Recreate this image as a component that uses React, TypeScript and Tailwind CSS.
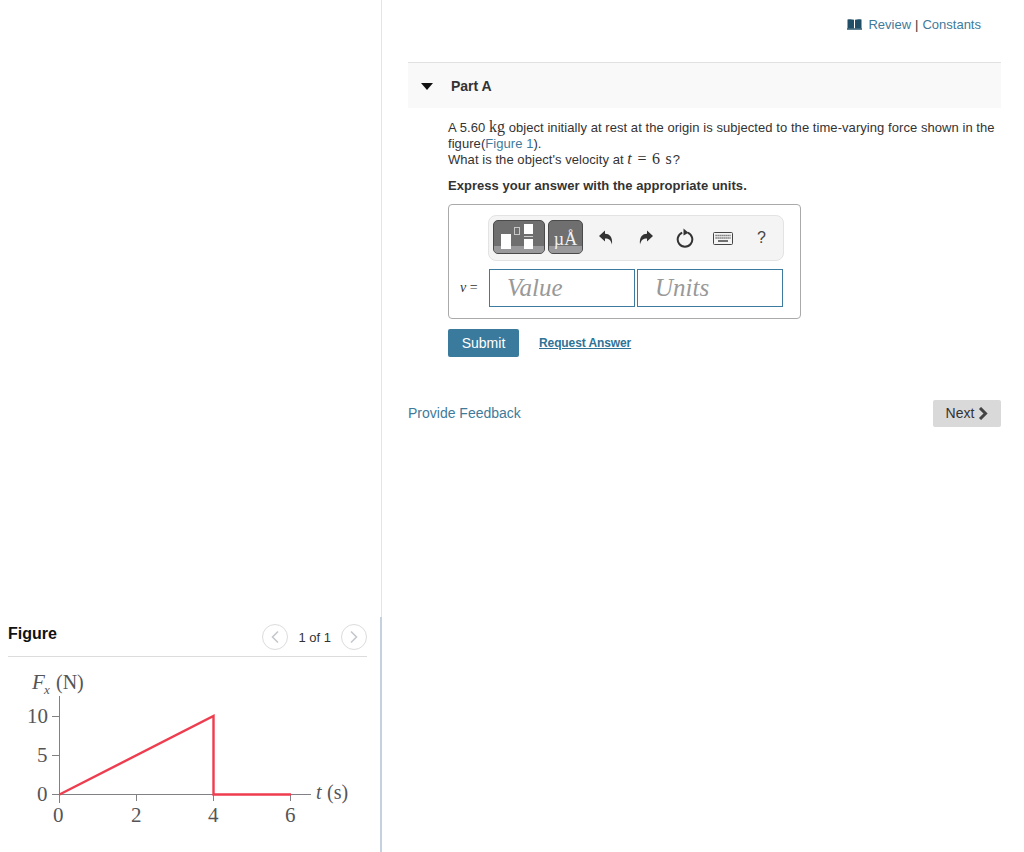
import React from "react";

const serif = "font-['Liberation_Serif',serif]";

function Book() {
  return (
    <svg width="15" height="11" viewBox="0 0 15 11" className="mr-[6px]">
      <path d="M0.5 0.5 C2.5 0 5 0 7 0.8 V9.5 H0.5Z" fill="#1f4e66" />
      <path d="M14.5 0.5 C12.5 0 10 0 8 0.8 V9.5 H14.5Z" fill="#1f4e66" />
      <rect x="0" y="9.3" width="15" height="1.4" fill="#1f4e66" />
    </svg>
  );
}

function FigureChart() {
  return (
    <svg width="381" height="195" viewBox="0 657 381 195" className="block">
      <g stroke="#808184" strokeWidth="1" fill="none">
        <path d="M59.5 696 V803" />
        <path d="M52 716.5 H59.5 M52 755.5 H59.5 M52 794.5 H311" />
        <path d="M136.5 794 V801 M213.5 794 V801 M290.5 794 V801" />
      </g>
      <path d="M59.5 794.5 L213.5 716 V794.5 H291" fill="none" stroke="#ee3d4f" strokeWidth="2.4" />
      <g fill="#555557" fontFamily="'Liberation Serif', serif" fontSize="21">
        <text x="32" y="689" fontStyle="italic">F</text>
        <text x="44" y="694" fontStyle="italic" fontSize="13">x</text>
        <text x="56" y="689" fontSize="20">(N)</text>
        <text x="27" y="723">10</text>
        <text x="37" y="762">5</text>
        <text x="37" y="801">0</text>
        <text x="53" y="822">0</text>
        <text x="131" y="822">2</text>
        <text x="208" y="822">4</text>
        <text x="285" y="822">6</text>
        <text x="316" y="799" fontStyle="italic" fontSize="20">t</text>
        <text x="327" y="799" fontSize="20">(s)</text>
      </g>
    </svg>
  );
}

function Pager({ dir }: { dir: "l" | "r" }) {
  return (
    <span className="flex h-[26px] w-[26px] items-center justify-center rounded-full border border-[#dcdcdc] bg-white">
      <svg width="10" height="14" viewBox="0 0 10 14" fill="none" stroke="#c4c8cc" strokeWidth="1.6">
        <path d={dir === "l" ? "M8 1.5 L2.5 7 L8 12.5" : "M2 1.5 L7.5 7 L2 12.5"} />
      </svg>
    </span>
  );
}

function Tools() {
  return (
    <div className="ml-[39px] flex h-[46px] w-[296px] items-center rounded-[8px] border border-[#e3e3e3] bg-[#f4f4f4] pl-[4px]">
      <span className="relative mb-[2px] h-[34px] w-[52px] overflow-hidden rounded-[5px] border border-[#4a4a4a] bg-[#6f6f6f]">
        <span className="absolute inset-x-0 bottom-0 h-[7px] bg-[#99999c]" />
        <span className="absolute left-[7px] top-[13px] h-[15px] w-[10px] bg-white" />
        <span className="absolute left-[20px] top-[6px] h-[8px] w-[6px] border border-[#c8c8c8]" />
        <span className="absolute left-[30px] top-[3px] h-[10px] w-[9px] bg-white" />
        <span className="absolute left-[30px] top-[15px] h-px w-[9px] bg-[#d0d0d0]" />
        <span className="absolute left-[30px] top-[18px] h-[10px] w-[9px] bg-white" />
      </span>
      <span className="relative mb-[2px] ml-[3px] h-[34px] w-[35px] overflow-hidden rounded-[5px] border border-[#4a4a4a] bg-[#6f6f6f]">
        <span className="absolute inset-x-0 bottom-0 h-[7px] bg-[#99999c]" />
        <span className={`absolute inset-x-0 top-[8px] text-center text-[18px] leading-[20px] text-[#f2f2f2] ${serif}`}>µÅ</span>
      </span>
      <svg width="14" height="15" viewBox="0 0 14 14" className="ml-[16px] mb-[1px]" fill="#333">
        <path d="M0 5.5 L6 0 V3.3 C10.5 3.3 13.8 6.5 13 14 C11.8 9.5 10 8 6 8 V11Z" />
      </svg>
      <svg width="14" height="15" viewBox="0 0 14 14" className="ml-[26px] mb-[1px]" fill="#333">
        <path d="M14 5.5 L8 0 V3.3 C3.5 3.3 0.2 6.5 1 14 C2.2 9.5 4 8 8 8 V11Z" />
      </svg>
      <svg width="18" height="20" viewBox="0 0 18 20" className="ml-[23px]" fill="none">
        <path d="M6.2 4.6 A7.3 7.3 0 1 0 11.8 4.6" stroke="#333" strokeWidth="2" />
        <path d="M7.5 0.5 L12.5 4.8 L7.5 7.5Z" fill="#333" />
      </svg>
      <svg width="20" height="13" viewBox="0 0 20 13" className="ml-[19px]" fill="none">
        <rect x="0.5" y="0.5" width="19" height="12" rx="1" fill="#f4f4f4" stroke="#444" />
        <path d="M2.5 3.5 H17.5 M2.5 6 H17.5" stroke="#555" strokeDasharray="1.2 0.8" strokeWidth="1.3" />
        <path d="M5 9 H15" stroke="#444" strokeWidth="1.5" />
      </svg>
      <span className="ml-[24px] mb-[1px] text-[16px] leading-none text-[#444]">?</span>
    </div>
  );
}

export default function App() {
  return (
    <div className="flex h-[852px] w-[1024px] overflow-hidden bg-white font-['Liberation_Sans',Arial,sans-serif] text-[#333]">
      <aside className="relative flex w-[382px] shrink-0 flex-col justify-end border-r border-[#e4e4e4]">
        <span className="absolute bottom-0 right-[-1px] h-[235px] w-[2px] bg-[#c5d1de]" />
        <div className="ml-[8px] flex h-[40px] w-[359px] items-center justify-between border-b border-[#dcdcdc] pb-[7px]">
          <h2 className="mt-[1px] text-[16px] font-bold leading-none text-[#111]">Figure</h2>
          <div className="mt-[8px] flex items-center">
            <Pager dir="l" />
            <span className="mx-[10px] text-[13px] leading-none text-[#333]">1 of 1</span>
            <Pager dir="r" />
          </div>
        </div>
        <FigureChart />
      </aside>

      <main className="flex-1 pl-[26px] pr-[23px]">
        <div className="flex h-[62px] items-start justify-end pr-[20px] pt-[17px] text-[13px] leading-[15px] text-[#3f7a9b]">
          <span className="flex items-center">
            <Book />
            Review <span className="mx-[4px] text-[#333]">|</span> Constants
          </span>
        </div>
        <div className="flex h-[46px] items-center border-t border-[#e2e2e2] bg-[#f9f9f9] pl-[13px] pt-[1px]">
          <span className="h-0 w-0 border-x-[6px] border-t-[7px] border-x-transparent border-t-[#111]" />
          <h3 className="ml-[18px] text-[14px] font-bold text-[#333]">Part A</h3>
        </div>
        <div className="pl-[40px] pt-[12px]">
          <p className="whitespace-nowrap text-[13px] leading-[16px] tracking-[0.06px] text-[#333]">
            A 5.60 <span className={`text-[16px] leading-[0] ${serif}`}>kg</span> object initially at rest at the origin is subjected to the time-varying force shown in the
            <br />
            figure(<span className="text-[#3f7a9b]">Figure 1</span>).
            <br />
            What is the object's velocity at <span className={`text-[16px] leading-[0] tracking-[0.8px] ${serif}`}><i>t</i> = 6 s</span>?
          </p>
          <p className="mt-[10px] text-[13px] font-bold leading-[16px] tracking-[0.04px] text-[#333]">Express your answer with the appropriate units.</p>
          <div className="mt-[10px] h-[115px] w-[353px] rounded-[4px] border border-[#aaa] pt-[10px]">
            <Tools />
            <div className="mt-[8px] flex items-center">
              <span className={`w-[40px] pl-[11px] text-[14px] leading-none text-[#333] ${serif}`}><i>v</i> =</span>
              <span className={`flex h-[38px] w-[146px] items-center border border-[#3d7c9e] pl-[17px] text-[25px] italic text-[#999] ${serif}`}>Value</span>
              <span className={`ml-[2px] flex h-[38px] w-[146px] items-center border border-[#3d7c9e] pl-[17px] text-[25px] italic text-[#999] ${serif}`}>Units</span>
            </div>
          </div>
          <div className="mt-[10px] flex items-center">
            <span className="flex h-[28px] w-[71px] items-center justify-center rounded-[2px] bg-[#3a7a9c] text-[14px] text-white">Submit</span>
            <span className="ml-[20px] text-[12px] font-bold tracking-[-0.1px] text-[#2f7396] underline">Request Answer</span>
          </div>
        </div>
        <div className="mt-[43px] flex items-center justify-between">
          <span className="text-[14px] text-[#3f7a9b]">Provide Feedback</span>
          <span className="flex h-[27px] w-[68px] items-center justify-center rounded-[2px] bg-[#d9d9d9] text-[14px] text-[#333]">
            Next
            <svg width="10" height="13" viewBox="0 0 10 13" className="ml-[4px]" fill="none" stroke="#444" strokeWidth="3">
              <path d="M2 1 L7.5 6.5 L2 12" />
            </svg>
          </span>
        </div>
      </main>
    </div>
  );
}
